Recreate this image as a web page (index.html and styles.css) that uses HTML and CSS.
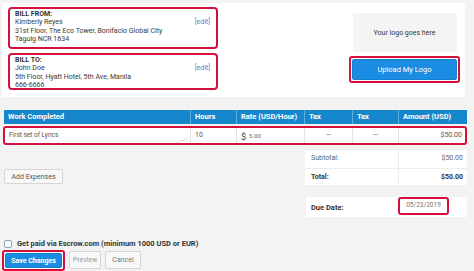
FILE: index.html
```html
<!DOCTYPE html>
<html lang="en">
<head>
    <meta charset="UTF-8">
    <meta name="viewport" content="width=device-width, initial-scale=1.0">
    <title>Invoice Editor</title>
    <link rel="stylesheet" href="styles.css">
</head>
<body>
    <section class="top-card">
        <div class="bill-list">
            <div class="bill-box bill-from">
                <div class="bill-text">
                    <div class="bill-title">BILL FROM:</div>
                    <div>Kimberly Reyes</div>
                    <div>31st Floor, The Eco Tower, Bonifacio Global City</div>
                    <div>Taguig NCR 1634</div>
                </div>
                <a class="edit-link" href="#">[edit]</a>
            </div>
            <div class="bill-box bill-to">
                <div class="bill-text">
                    <div class="bill-title">BILL TO:</div>
                    <div>John Doe</div>
                    <div>5th Floor, Hyatt Hotel, 5th Ave, Manila</div>
                    <div>666-6666</div>
                </div>
                <a class="edit-link" href="#">[edit]</a>
            </div>
        </div>
        <div class="logo-col">
            <div class="logo-box">Your logo goes here</div>
            <div class="outline">
                <button class="btn btn-primary btn-upload">Upload My Logo</button>
            </div>
        </div>
    </section>

    <section class="items">
        <div class="grid-row head">
            <div class="cell">Work Completed</div>
            <div class="cell">Hours</div>
            <div class="cell">Rate (USD/Hour)</div>
            <div class="cell">Tax</div>
            <div class="cell">Tax</div>
            <div class="cell">Amount (USD)</div>
        </div>
        <div class="grid-row item">
            <div class="cell desc">First set of Lyrics<span class="grip"></span></div>
            <div class="cell">10</div>
            <div class="cell rate"><span class="currency">$</span><span class="rate-value">5.00</span></div>
            <div class="cell dash">&mdash;</div>
            <div class="cell dash">&mdash;</div>
            <div class="cell amount">$50.00</div>
        </div>
    </section>

    <div class="summary">
        <button class="btn btn-light btn-add">Add Expenses</button>
        <div class="totals">
            <div class="total-row">
                <div class="cell label">Subtotal:</div>
                <div class="cell amount">$50.00</div>
            </div>
            <div class="total-row grand">
                <div class="cell label">Total:</div>
                <div class="cell amount">$50.00</div>
            </div>
        </div>
    </div>

    <div class="due-row">
        <div class="due-card">
            <div class="due-label">Due Date:</div>
            <div class="due-input">05/23/2019</div>
        </div>
    </div>

    <label class="escrow">
        <span class="checkbox"></span>
        Get paid via Escrow.com (minimum 1000 USD or EUR)
    </label>

    <div class="actions">
        <div class="outline outline-save">
            <button class="btn btn-primary btn-save">Save Changes</button>
        </div>
        <button class="btn btn-light btn-preview">Preview</button>
        <button class="btn btn-light btn-cancel">Cancel</button>
    </div>
</body>
</html>
```

FILE: styles.css
```css
* {
    box-sizing: border-box;
}

body {
    margin: 0;
    background: #f3f3f3;
    color: #333;
    font-family: 'Roboto', 'Liberation Sans', sans-serif;
    font-size: 7px;
    width: 474px;
    height: 271px;
    overflow: hidden;
}

.btn {
    font-family: inherit;
    border-radius: 2px;
    cursor: pointer;
    padding: 0;
}

.btn-primary {
    background: #1a8de3;
    border: 1px solid #1680d0;
    color: #fff;
}

.btn-light {
    background: #f8f8f8;
    border: 1px solid #d6d6d6;
    color: #555;
    font-size: 7px;
}

.outline {
    border: 2px solid #d4113e;
    border-radius: 3px;
    padding: 1px;
    background: #fff;
}

/* Top card */
.top-card {
    display: flex;
    justify-content: space-between;
    background: #fff;
    margin: 3px 9px 0 2px;
    height: 94px;
    padding: 4px 5px 0 6px;
}

.bill-list {
    display: flex;
    flex-direction: column;
    gap: 4px;
    width: 210px;
}

.bill-box {
    display: flex;
    justify-content: space-between;
    border: 2px solid #d4113e;
    border-radius: 4px;
    padding: 1px 6px 0 5px;
    line-height: 8.3px;
    color: #3a3a3a;
}

.bill-from {
    height: 42px;
}

.bill-to {
    height: 37px;
}

.bill-title {
    font-weight: bold;
    color: #333;
}

.edit-link {
    color: #3b8fd6;
    text-decoration: none;
    padding-top: 8.3px;
}

.logo-col {
    display: flex;
    flex-direction: column;
    align-items: center;
    width: 111px;
    padding-top: 6px;
}

.logo-box {
    width: 104px;
    height: 39px;
    background: #f4f4f4;
    display: flex;
    align-items: center;
    justify-content: center;
    color: #333;
    font-size: 7px;
}

.logo-col .outline {
    margin-top: 4px;
    width: 111px;
}

.btn-upload {
    display: block;
    width: 100%;
    height: 21px;
    font-size: 7.5px;
}

/* Items table */
.items {
    margin: 13px 7px 0 4px;
}

.grid-row {
    display: grid;
    grid-template-columns: 186px 46px 68px 48px 46px 69px;
}

.head {
    background: #1787cd;
    color: #fff;
    font-weight: bold;
    font-size: 7.5px;
    height: 14px;
}

.head .cell {
    padding: 0 4px;
    line-height: 14px;
    border-left: 1px solid #5eaee0;
}

.head .cell:first-child {
    border-left: none;
}

.item {
    margin: 2px 0 0 -1px;
    height: 19px;
    border: 2px solid #d4113e;
    border-radius: 3px;
    background: #fff;
    grid-template-columns: 185px 46px 68px 48px 46px 68px;
    color: #555;
}

.item .cell {
    padding: 0 4px;
    line-height: 15px;
    border-left: 1px solid #e4e4e4;
    position: relative;
}

.item .cell:first-child {
    border-left: none;
}

.item .desc {
    font-size: 6.5px;
}

.grip {
    position: absolute;
    right: 4px;
    bottom: 2px;
    width: 4px;
    height: 4px;
    border-right: 1px solid #bbb;
    border-bottom: 1px solid #bbb;
    transform: skew(-45deg);
    opacity: 0.6;
}

.rate {
    display: flex;
    align-items: baseline;
    gap: 3px;
}

.currency {
    font-size: 9px;
    color: #444;
    position: relative;
    top: 2px;
}

.rate-value {
    font-size: 6px;
    color: #666;
}

.dash {
    text-align: center;
    color: #777;
}

.amount {
    text-align: right;
}

/* Totals */
.summary {
    display: flex;
    justify-content: space-between;
    align-items: flex-start;
    margin: 5px 7px 0 4px;
}

.btn-add {
    margin-top: 19px;
    width: 59px;
    height: 15px;
}

.totals {
    width: 162px;
    background: #fff;
}

.total-row {
    display: grid;
    grid-template-columns: 93px 69px;
    height: 17.5px;
    line-height: 17.5px;
    color: #666;
}

.total-row + .total-row {
    border-top: 1px solid #ececec;
}

.total-row .cell {
    padding: 0 4px 0 6px;
}

.total-row .amount {
    border-left: 1px solid #ececec;
}

.grand {
    font-weight: bold;
    color: #333;
}

/* Due date */
.due-row {
    display: flex;
    justify-content: flex-end;
    margin: 12px 7px 0 0;
}

.due-card {
    width: 161px;
    height: 20px;
    background: #fff;
    display: flex;
    align-items: center;
    justify-content: space-between;
    padding: 0 18px 0 5px;
}

.due-label {
    font-weight: bold;
    color: #333;
    font-size: 7.5px;
}

.due-input {
    width: 51px;
    height: 18px;
    border: 2px solid #d4113e;
    border-radius: 3px;
    text-align: center;
    line-height: 13px;
    color: #777;
    font-size: 6.5px;
    align-self: flex-start;
}

/* Escrow and actions */
.escrow {
    display: flex;
    align-items: center;
    gap: 5px;
    margin: 22px 0 0 4px;
    font-weight: bold;
    color: #333;
    font-size: 7.5px;
}

.checkbox {
    width: 8px;
    height: 8px;
    border: 1px solid #8aa4bf;
    border-radius: 2px;
    background: #fff;
}

.actions {
    display: flex;
    align-items: flex-start;
    gap: 4px;
    margin: 2px 0 0 2px;
}

.outline-save {
    width: 63px;
    height: 21px;
}

.btn-save {
    display: block;
    width: 100%;
    height: 100%;
    font-size: 7px;
    font-weight: bold;
}

.btn-preview {
    margin-top: 1px;
    width: 32px;
    height: 18px;
    color: #999;
}

.btn-cancel {
    margin-top: 1px;
    width: 36px;
    height: 18px;
    color: #777;
}
```
